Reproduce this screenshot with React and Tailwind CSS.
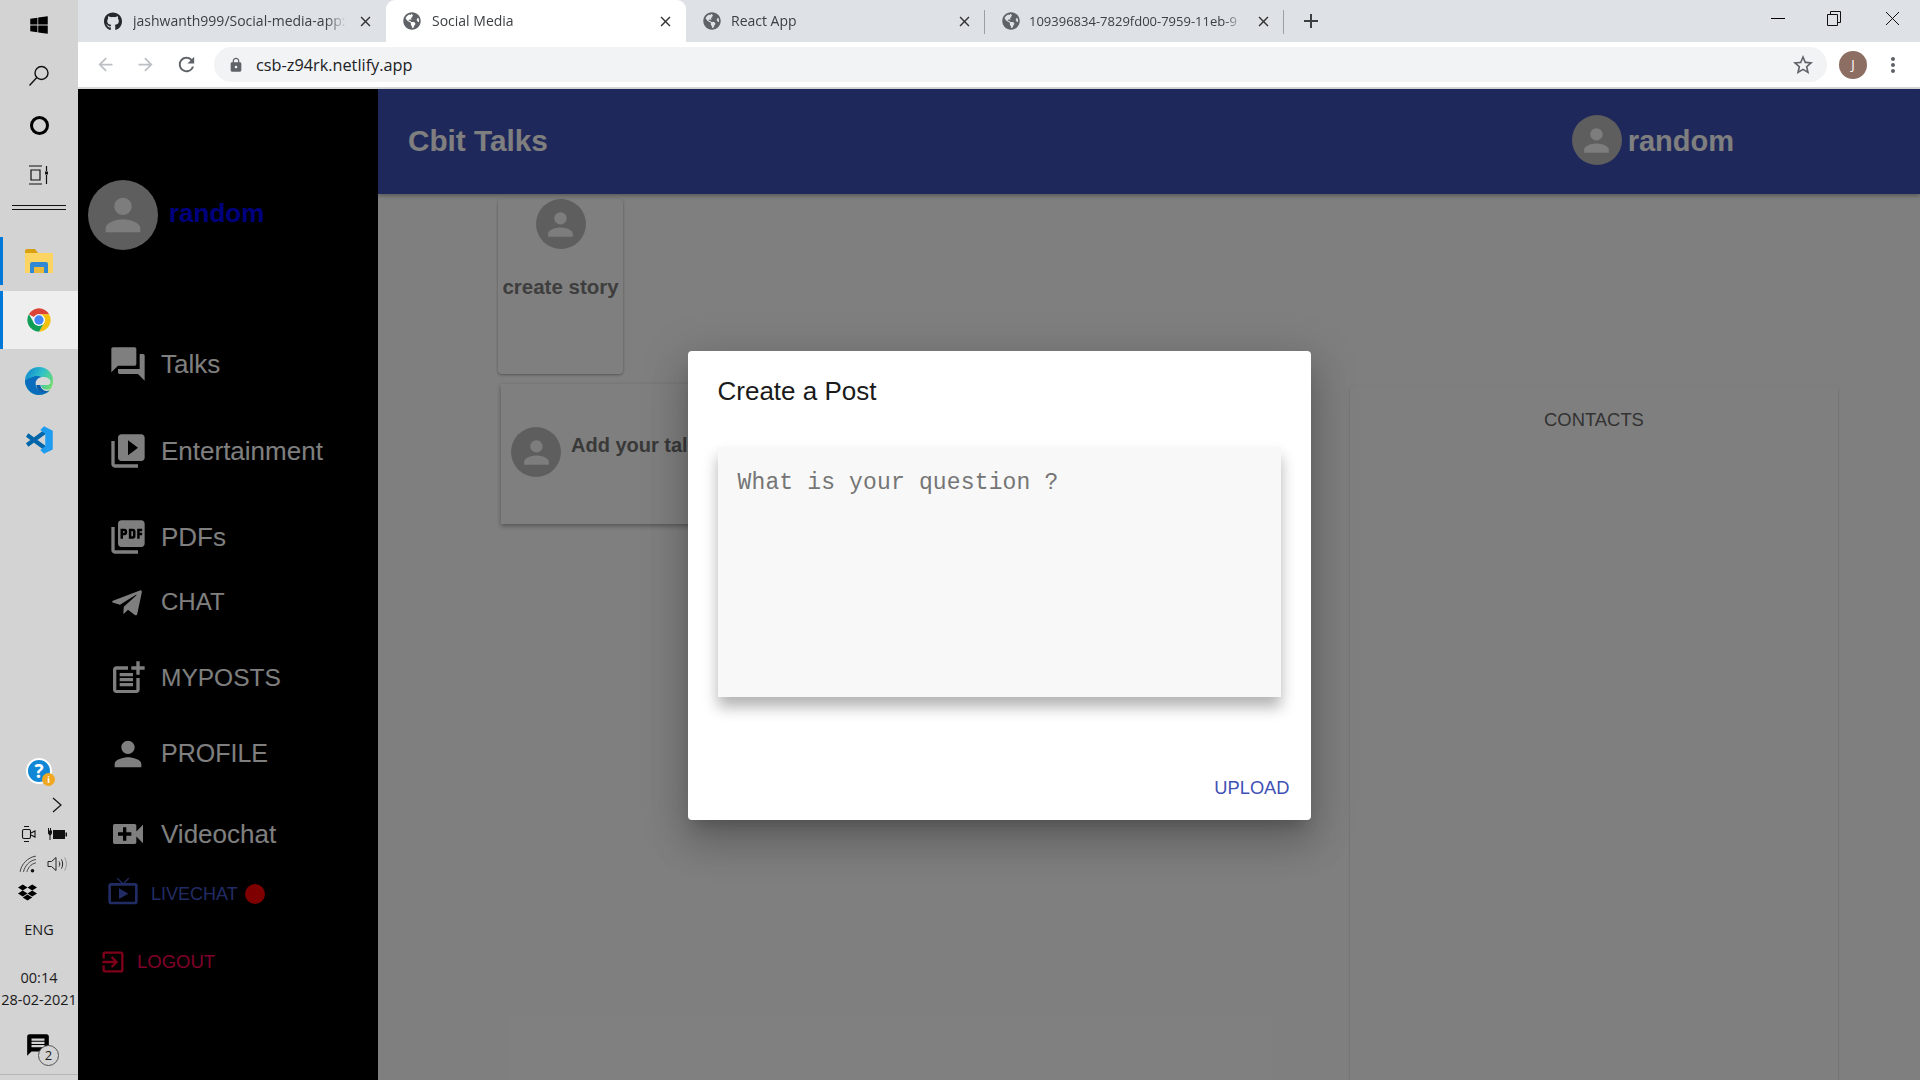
import React from "react";
import { FaWindows, FaGithub, FaGlobeAmericas, FaDropbox, FaTelegramPlane } from "react-icons/fa";
import {
  MdArrowBack,
  MdArrowForward,
  MdClose,
  MdExitToApp,
  MdForum,
  MdLiveTv,
  MdLock,
  MdMessage,
  MdMoreVert,
  MdPerson,
  MdPictureAsPdf,
  MdPostAdd,
  MdRefresh,
  MdStarBorder,
  MdVideoCall,
  MdVideoLibrary,
} from "react-icons/md";

function ChromeLogo({ size = 28 }) {
  return (
    <svg width={size} height={size} viewBox="0 0 48 48">
      <path fill="#db4437" d="M6.68 14A20 20 0 0 1 41.32 14H24A10 10 0 0 0 15.34 19Z" />
      <path fill="#f4c20d" d="M41.32 14A20 20 0 0 1 24 44L32.66 29A10 10 0 0 0 24 14Z" />
      <path fill="#0f9d58" d="M6.68 14L15.34 29A10 10 0 0 0 32.66 29L24 44A20 20 0 0 1 6.68 14Z" />
      <circle cx="24" cy="24" r="10" fill="#fff" />
      <circle cx="24" cy="24" r="8" fill="#4285f4" />
    </svg>
  );
}

function EdgeLogo() {
  return (
    <svg width="32" height="32" viewBox="0 0 48 48">
      <defs>
        <linearGradient id="edgeTop" x1="0" y1="0" x2="1" y2="0.6">
          <stop offset="0" stopColor="#0c7fd0" />
          <stop offset="0.55" stopColor="#2fc2c8" />
          <stop offset="1" stopColor="#6fdc6c" />
        </linearGradient>
      </defs>
      <circle cx="24" cy="24" r="21" fill="url(#edgeTop)" />
      <path fill="#0a6cbd" d="M3 24C4 36 13 45 24 45c6 0 12-2 16-7-5 3-13 3-17-1-5-4-5-11 0-15 3-2 7-2 9 0-4-6-13-7-20-3-5 1-8 3-9 5Z" />
      <path fill="#d8d8d8" d="M19 27c0-5 5-9 11-9 5 0 10 2 11 6 1 3-1 6-5 6H27c0 4 4 7 9 7 2 0 4-1 5-1-3 3-7 4-11 4-7 0-11-6-11-13Z" />
      <path fill="#0a5ea8" d="M20 30c0 7 5 11 11 11 3 0 6-1 8-2-6 1-12-2-13-9Z" />
    </svg>
  );
}

function VsCodeLogo() {
  return (
    <svg width="30" height="30" viewBox="0 0 48 48">
      <path stroke="#0065a9" strokeWidth="6.5" fill="none" d="M5 16L35 38M5 32L35 10" />
      <path fill="#1f9cf0" d="M32 2L46 9V39L32 46L26 40L34 34V14L26 8Z" />
    </svg>
  );
}

function FolderLogo() {
  return (
    <svg width="28" height="24" viewBox="0 0 28 24">
      <path fill="#d9a012" d="M0 2a2 2 0 0 1 2-2h8l3 4H0Z" />
      <path fill="#fcd462" d="M0 4h28v20H0Z" />
      <path fill="#2f88d4" d="M5 24V15a2 2 0 0 1 2-2h14a2 2 0 0 1 2 2v9h-4v-6H9v6Z" />
      <path fill="#e8b93a" d="M9 18h10v6H9Z" />
    </svg>
  );
}

function TaskbarTop() {
  return (
    <div className="flex flex-col items-center">
      <FaWindows className="mt-[15px] text-black" size={20} />
      <svg className="mt-[30px]" width="22" height="22" viewBox="0 0 22 22" fill="none" stroke="#111" strokeWidth="1.4">
        <circle cx="13.5" cy="8" r="6.5" />
        <path d="M8.8 12.6L1.5 20.5" />
      </svg>
      <div className="mt-[29px] w-[19px] h-[19px] rounded-full border-[3px] border-black" />
      <svg className="mt-[30px]" width="22" height="20" viewBox="0 0 22 20" fill="none" stroke="#111" strokeWidth="1.2">
        <path d="M1 1H14M1 19H14M3 5H12V15H3ZM18.5 1V6M18.5 10V19" />
        <rect x="17" y="6.5" width="3" height="3" fill="#111" stroke="none" />
      </svg>
      <div className="mt-[20px] w-[54px] h-[5px] border-y border-[#111]" />
      <div className="mt-[27px] w-full h-[48px] border-l-[3px] border-[#0078d7] flex items-center justify-center pr-[3px]">
        <FolderLogo />
      </div>
      <div className="mt-[6px] w-full h-[58px] border-l-[3px] border-[#0078d7] bg-[#eeeeee] flex items-center justify-center pr-[3px]">
        <ChromeLogo />
      </div>
      <div className="mt-[16px]">
        <EdgeLogo />
      </div>
      <div className="mt-[28px]">
        <VsCodeLogo />
      </div>
    </div>
  );
}

function TaskbarBottom() {
  return (
    <div className="flex flex-col items-center text-[14.5px] text-[#1a1a1a]">
      <div className="relative w-[26px] h-[26px] rounded-full bg-[#0f87d6] border-2 border-white flex items-center justify-center">
        <span className="text-white font-bold text-[19px] leading-none">?</span>
        <span className="absolute -right-[5px] -bottom-[4px] w-[13px] h-[13px] rounded-full bg-[#f0a820] text-white text-[9px] font-bold leading-[13px] text-center">
          i
        </span>
      </div>
      <svg className="mt-[13px] ml-[36px]" width="10" height="16" viewBox="0 0 10 16" fill="none" stroke="#111" strokeWidth="1.2">
        <path d="M1 1L9 8L1 15" />
      </svg>
      <div className="mt-[12px] w-full flex items-center gap-[11px] pl-[21px]">
        <svg width="15" height="18" viewBox="0 0 15 18" fill="none" stroke="#111" strokeWidth="1.1">
          <rect x="1.5" y="4.5" width="8" height="9" rx="1.5" />
          <path d="M10 8L14 6V12L10 10M3 1.5H8M3 16.5H8" />
        </svg>
        <svg width="20" height="13" viewBox="0 0 20 13">
          <path fill="#111" d="M6 2h12v9H6ZM18.5 4.5H20v4h-1.5ZM1 0h1v2.5h1V0h1v2.5h1v3L3.5 7.5V12h-1V7.5L1 5.5Z" />
        </svg>
      </div>
      <div className="mt-[12px] w-full flex items-center gap-[10px] pl-[19px]">
        <svg width="18" height="18" viewBox="0 0 16 16" fill="none" stroke="#333" strokeWidth="0.8">
          <path d="M1 15C2 8 8 2 15 1M4 15C5 10 9 5 15 4M7 15C8 12 10 8 15 7" />
          <circle cx="12" cy="14" r="1.6" fill="#111" stroke="none" />
        </svg>
        <svg width="20" height="16" viewBox="0 0 20 16" fill="none" stroke="#222" strokeWidth="1">
          <path d="M1 5.5H4.5L9 1.5V14.5L4.5 10.5H1ZM12 5.5C13 7 13 9 12 10.5M14.5 3.5C16 6 16 10 14.5 12.5" />
          <path stroke="#999" d="M17.5 1.5C20 5 20 11 17.5 14.5" />
        </svg>
      </div>
      <FaDropbox className="mt-[10px] mr-[24px] text-black" size={19} />
      <div className="mt-[18px] leading-[20px]">ENG</div>
      <div className="mt-[27px] leading-[22px]">00:14</div>
      <div className="leading-[22px] whitespace-nowrap">28-02-2021</div>
      <div className="relative mt-[23px] w-[22px] h-[24px] mr-[2px]">
        <MdMessage className="text-black -ml-[2px] -mt-[2px]" size={26} />
        <span className="absolute -right-[10px] -bottom-[8px] w-[21px] h-[21px] rounded-full bg-[#d3d3d3] border border-[#555] text-[13px] leading-[19px] text-center">
          2
        </span>
      </div>
      <div className="mt-[16px] w-full h-px bg-[#b5b5b5]" />
      <div className="h-[5px]" />
    </div>
  );
}

function Taskbar() {
  return (
    <div className="w-[78px] shrink-0 bg-[#d3d3d3] flex flex-col justify-between font-['Open_Sans',sans-serif]">
      <TaskbarTop />
      <TaskbarBottom />
    </div>
  );
}

function Tab({ icon, title, active, divider, gap = "ml-[11px]", size = "text-[14px]" }) {
  return (
    <div
      className={
        active
          ? "relative w-[300px] h-[42px] flex items-center pl-[17px] pr-[12px] bg-white rounded-t-[9px]"
          : "relative w-[299px] h-[42px] flex items-center pl-[17px] pr-[12px]"
      }
    >
      <span className="w-[18px] shrink-0 flex justify-center text-[#5f6368]">{icon}</span>
      <span
        className={`${gap} ${size} flex-1 overflow-hidden whitespace-nowrap leading-[20px] pb-[1px] text-[#3c4043] [mask-image:linear-gradient(to_right,black_90%,transparent)]`}
      >
        {title}
      </span>
      <MdClose className="ml-[10px] shrink-0 text-[#333]" size={17} />
      {divider && <span className="absolute right-0 top-[10px] h-[24px] w-px bg-[#9aa0a6]" />}
    </div>
  );
}

function BrowserChrome() {
  return (
    <div className="shrink-0 font-['Open_Sans',sans-serif]">
      <div className="h-[42px] bg-[#dee1e6] flex items-center pl-[9px]">
        <Tab icon={<FaGithub size={19} className="text-[#24292e]" />} title="jashwanth999/Social-media-app:" />
        <Tab active icon={<FaGlobeAmericas size={18} />} title="Social Media" />
        <Tab divider gap="ml-[10px]" icon={<FaGlobeAmericas size={18} />} title="React App" />
        <Tab divider gap="ml-[9px]" size="text-[13px]" icon={<FaGlobeAmericas size={18} />} title="109396834-7829fd00-7959-11eb-9" />
        <svg className="ml-[19px]" width="16" height="16" viewBox="0 0 16 16" stroke="#3c4043" strokeWidth="2">
          <path d="M8 1V15M1 8H15" />
        </svg>
        <div className="ml-auto flex items-center pr-[20px] mb-[6px]">
          <div className="w-[14px] h-px bg-black" />
          <svg className="ml-[42px]" width="14" height="15" viewBox="0 0 14 15" fill="none" stroke="#111" strokeWidth="1">
            <path d="M.5 3.5H10.5V14.5H.5ZM3.5 3.5V.5H13.5V11.5H10.5" />
          </svg>
          <svg className="ml-[44px]" width="15" height="15" viewBox="0 0 15 15" stroke="#111" strokeWidth="1">
            <path d="M1 1L14 14M14 1L1 14" />
          </svg>
        </div>
      </div>
      <div className="h-[45px] bg-white flex items-center relative">
        <MdArrowBack className="ml-[17px] text-[#bcbfc4]" size={21} />
        <MdArrowForward className="ml-[19px] text-[#bcbfc4]" size={21} />
        <MdRefresh className="ml-[19px] text-[#5f6368]" size={23} />
        <div className="ml-[16px] w-[1613px] h-[35px] bg-[#f1f3f4] rounded-full flex items-center pl-[14px] pr-[12px]">
          <MdLock className="text-[#5f6368]" size={16} />
          <span className="ml-[12px] mt-[1px] text-[16.3px] text-[#202124]">csb-z94rk.netlify.app</span>
          <MdStarBorder className="ml-auto text-[#5f6368]" size={24} />
        </div>
        <div className="ml-[12px] w-[28px] h-[28px] rounded-full bg-[#8d6e63] text-white text-[13px] flex items-center justify-center">
          J
        </div>
        <MdMoreVert className="ml-[14px] text-[#5f6368]" size={24} />
      </div>
      <div className="h-[2px] bg-[#d9d9d9]" />
    </div>
  );
}

function NavRow({ icon, label, mt, size = "text-[24px]" }) {
  return (
    <div className={`flex items-center h-[40px] ${mt}`}>
      <span className="w-[83px] shrink-0 pl-[30px] flex">{icon}</span>
      <span className={`text-white ${size}`}>{label}</span>
    </div>
  );
}

function Sidebar() {
  return (
    <aside className="w-[300px] shrink-0 bg-black">
      <div className="mt-[91px] ml-[10px] flex items-center gap-[11px]">
        <div className="w-[70px] h-[70px] rounded-full bg-[#bdbdbd] flex items-center justify-center">
          <MdPerson className="text-[#fafafa]" size={52} />
        </div>
        <span className="mb-[4px] text-[#0000ff] text-[26px] font-bold">random</span>
      </div>
      <NavRow mt="mt-[94px]" size="text-[26px]" icon={<MdForum className="text-white" size={40} />} label="Talks" />
      <NavRow mt="mt-[47px]" size="text-[26px]" icon={<MdVideoLibrary className="text-white" size={40} />} label="Entertainment" />
      <NavRow mt="mt-[46px]" size="text-[26px]" icon={<MdPictureAsPdf className="text-white" size={40} />} label="PDFs" />
      <NavRow mt="mt-[25px]" icon={<FaTelegramPlane className="text-white ml-[2px] mt-[2px]" size={34} />} label="CHAT" />
      <NavRow mt="mt-[36px]" size="text-[24.5px]" icon={<MdPostAdd className="text-white" size={40} />} label="MYPOSTS" />
      <NavRow mt="mt-[36px]" size="text-[25px]" icon={<MdPerson className="text-white" size={40} />} label="PROFILE" />
      <NavRow mt="mt-[40px]" size="text-[26px]" icon={<MdVideoCall className="text-white" size={40} />} label="Videochat" />
      <div className="mt-[20px] h-[40px] flex items-center pl-[29px]">
        <MdLiveTv className="mb-[6px] text-[#4559c8]" size={32} />
        <span className="ml-[12px] text-[18px] text-[#4559c8]">LIVECHAT</span>
        <span className="ml-[7px] w-[20px] h-[20px] rounded-full bg-[#ff0000]" />
      </div>
      <div className="mt-[28px] h-[40px] flex items-center pl-[21px]">
        <MdExitToApp className="text-[#ff0033]" size={28} />
        <span className="ml-[10px] text-[18.5px] text-[#ff0055]">LOGOUT</span>
      </div>
    </aside>
  );
}

function Feed() {
  return (
    <main className="flex-1 flex flex-col min-w-0 bg-white">
      <header className="h-[105px] shrink-0 bg-[#3f51b5] flex items-center pl-[30px] pr-[186px] shadow-[0_2px_4px_rgba(0,0,0,0.3)] z-10 text-white">
        <span className="text-[29.7px] font-bold">Cbit Talks</span>
        <div className="ml-auto flex items-center gap-[6px] mb-[3px]">
          <div className="w-[50px] h-[50px] rounded-full bg-[#bdbdbd] flex items-center justify-center">
            <MdPerson className="text-[#fafafa]" size={37} />
          </div>
          <span className="mt-[3px] text-[29px] font-bold">random</span>
        </div>
      </header>
      <div className="flex-1 flex min-h-0">
        <div className="w-[972px] shrink-0">
          <div className="mt-[5px] ml-[120px] w-[125px] h-[175px] rounded-[4px] bg-white shadow-[0_1px_3px_rgba(0,0,0,0.35)] flex flex-col items-center">
            <div className="w-[50px] h-[50px] rounded-full bg-[#bdbdbd] flex items-center justify-center">
              <MdPerson className="text-[#fafafa]" size={37} />
            </div>
            <span className="mt-[23px] text-[20.5px] font-bold text-[#7c7c7c] whitespace-nowrap">create story</span>
          </div>
          <div className="mt-[10px] ml-[123px] w-[800px] h-[140px] bg-white shadow-[0_2px_5px_rgba(0,0,0,0.35)] flex pl-[10px] pt-[43px]">
            <div className="w-[50px] h-[50px] rounded-full bg-[#bdbdbd] flex items-center justify-center">
              <MdPerson className="text-[#fafafa]" size={37} />
            </div>
            <span className="ml-[10px] mt-[3px] text-[20px] font-bold text-[#727272]">Add your talk</span>
          </div>
        </div>
        <div className="mt-[192px] w-[488px] shrink-0 bg-white rounded-t-[4px] shadow-[0_1px_3px_rgba(0,0,0,0.2)] pt-[23px] text-center text-[18.4px] text-[#666666] leading-[21px]">
          CONTACTS
        </div>
      </div>
    </main>
  );
}

function PostDialog() {
  return (
    <div className="absolute inset-0 z-20 bg-black/50 flex items-center justify-center">
      <div className="w-[623px] h-[469px] mt-[2px] bg-white rounded-[4px] flex flex-col shadow-[0_11px_15px_-7px_rgba(0,0,0,0.2),0_24px_38px_3px_rgba(0,0,0,0.14),0_9px_46px_8px_rgba(0,0,0,0.12)]">
        <h2 className="mt-[23px] ml-[30px] text-[26px] leading-[34px] text-[#1a1a1a]">Create a Post</h2>
        <textarea
          placeholder="What is your question ?"
          className="mt-[39px] ml-[30px] w-[563px] h-[250px] shrink-0 resize-none bg-[#f8f8f8] px-[20px] pt-[23px] pb-[18px] font-['Liberation_Mono',monospace] text-[23px] tracking-[0.15px] leading-[27px] outline-none placeholder:text-[#757575] shadow-[0_10px_14px_rgba(0,0,0,0.3)]"
        />
        <div className="mt-auto mb-[19px] mr-[21px] text-right text-[18.3px] leading-[26px] text-[#3f51b5]">UPLOAD</div>
      </div>
    </div>
  );
}

export default function App() {
  return (
    <div className="flex w-[1920px] h-screen overflow-hidden bg-white font-['Liberation_Sans',sans-serif]">
      <Taskbar />
      <div className="flex-1 flex flex-col min-w-0">
        <BrowserChrome />
        <div className="relative flex-1 flex min-h-0">
          <Sidebar />
          <Feed />
          <PostDialog />
        </div>
      </div>
    </div>
  );
}
